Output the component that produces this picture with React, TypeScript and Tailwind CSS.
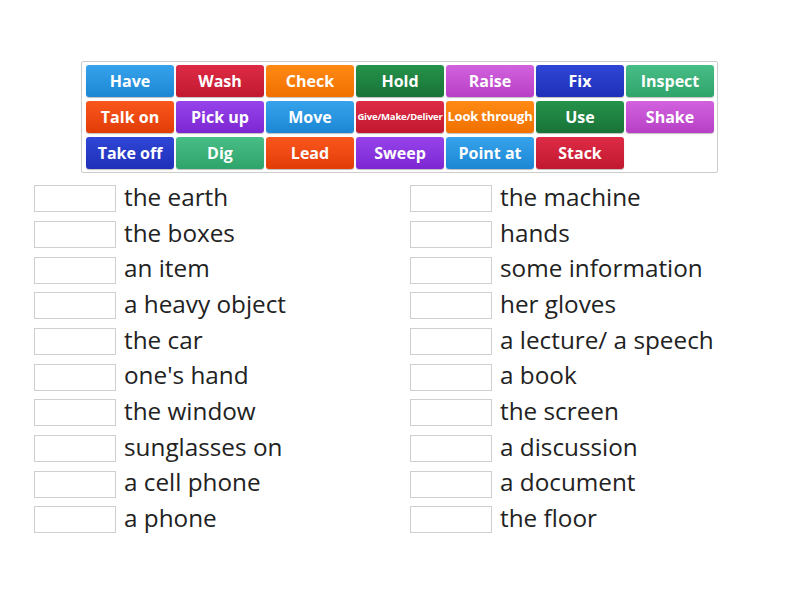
const blue = "from-[#36a3ec] to-[#1b86d3]";
const crimson = "from-[#de2b46] to-[#c1182f]";
const orange = "from-[#ff8a14] to-[#f07000]";
const darkGreen = "from-[#25934b] to-[#197337]";
const orchid = "from-[#d262de] to-[#b73fc5]";
const royal = "from-[#2f46d6] to-[#1f2fb8]";
const teal = "from-[#48be87] to-[#2ea46b]";
const orangeRed = "from-[#f9561c] to-[#e23c05]";
const purple = "from-[#9743ec] to-[#7c26d2]";

type Tile = { label: string; color: string; size?: string };

const tiles: Tile[] = [
  { label: "Have", color: blue },
  { label: "Wash", color: crimson },
  { label: "Check", color: orange },
  { label: "Hold", color: darkGreen },
  { label: "Raise", color: orchid },
  { label: "Fix", color: royal },
  { label: "Inspect", color: teal },
  { label: "Talk on", color: orangeRed },
  { label: "Pick up", color: purple },
  { label: "Move", color: blue },
  { label: "Give/Make/Deliver", color: crimson, size: "text-[9.5px] tracking-[-0.2px]" },
  { label: "Look through", color: orange, size: "text-[13px] tracking-[-0.2px]" },
  { label: "Use", color: darkGreen },
  { label: "Shake", color: orchid },
  { label: "Take off", color: royal },
  { label: "Dig", color: teal },
  { label: "Lead", color: orangeRed },
  { label: "Sweep", color: purple },
  { label: "Point at", color: blue },
  { label: "Stack", color: crimson },
];

const left = [
  "the earth",
  "the boxes",
  "an item",
  "a heavy object",
  "the car",
  "one's hand",
  "the window",
  "sunglasses on",
  "a cell phone",
  "a phone",
];

const right = [
  "the machine",
  "hands",
  "some information",
  "her gloves",
  "a lecture/ a speech",
  "a book",
  "the screen",
  "a discussion",
  "a document",
  "the floor",
];

function Blank({ text }: { text: string }) {
  return (
    <div className="h-[35.67px] flex items-center gap-[8px]">
      <div className="w-[82px] h-[27px] border border-[#cfcfcf] bg-white shrink-0" />
      <span className="text-[24.3px] leading-none text-[#222] whitespace-nowrap pb-[3px]">
        {text}
      </span>
    </div>
  );
}

export default function App() {
  return (
    <div
      className="w-[800px] h-[600px] bg-white overflow-hidden"
      style={{ fontFamily: '"Open Sans", sans-serif' }}
    >
      <div className="ml-[81px] mt-[61px] w-[637px] h-[112px] border border-[#cccccc] rounded-[2px] pl-[4px] pt-[3px]">
        <div className="grid grid-cols-[repeat(7,88px)] grid-rows-[repeat(3,32px)] gap-x-[2px] gap-y-[4px]">
          {tiles.map((t) => (
            <div
              key={t.label}
              className={`bg-linear-to-b ${t.color} rounded-[3px] shadow-[0_1px_1px_rgba(0,0,0,0.25)] flex items-center justify-center text-white font-bold whitespace-nowrap ${
                t.size ?? "text-[16px]"
              }`}
            >
              {t.label}
            </div>
          ))}
        </div>
      </div>
      <div className="ml-[34px] mt-[8px] grid grid-cols-[376px_376px]">
        <div className="flex flex-col">
          {left.map((w) => (
            <Blank key={w} text={w} />
          ))}
        </div>
        <div className="flex flex-col">
          {right.map((w) => (
            <Blank key={w} text={w} />
          ))}
        </div>
      </div>
    </div>
  );
}
